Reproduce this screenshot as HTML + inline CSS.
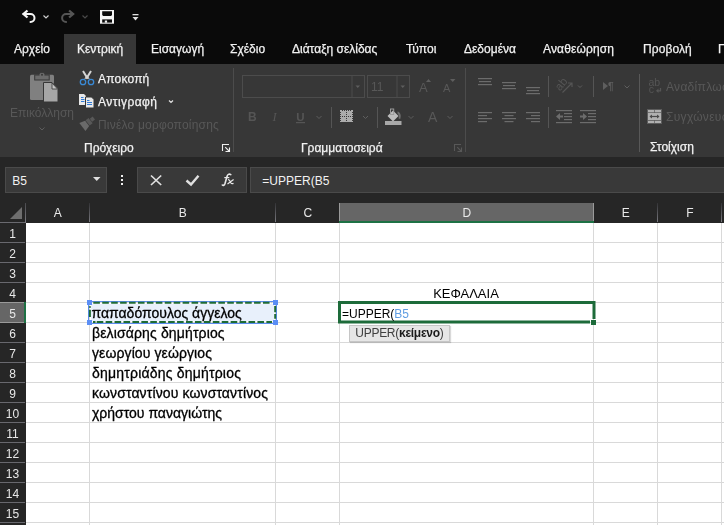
<!DOCTYPE html>
<html><head><meta charset="utf-8">
<style>
*{margin:0;padding:0;box-sizing:border-box}
html,body{width:724px;height:525px;overflow:hidden;background:#0a0a0a;font-family:"Liberation Sans",sans-serif;position:relative}
.a{position:absolute}
.t{position:absolute;white-space:nowrap;line-height:20px}
.wc{will-change:transform}
.bw{-webkit-text-stroke:0.25px currentColor}
svg{position:absolute;overflow:visible}
</style></head><body>

<svg style="left:0;top:0" width="724" height="34"><path d="M27.5 10.5 L23.5 14 L27.5 17.5" fill="none" stroke="#f5f5f5" stroke-width="2.3"/><path d="M23.5 14 H30.5 A4 4 0 0 1 30.5 22" fill="none" stroke="#f5f5f5" stroke-width="2" stroke-linecap="round"/><path d="M43.5 15.5 L46 18 L48.5 15.5" fill="none" stroke="#cfcfcf" stroke-width="1.2"/><path d="M69.1 10.5 L73.1 14 L69.1 17.5" fill="none" stroke="#555555" stroke-width="2.3"/><path d="M73.1 14 H66.1 A4 4 0 0 0 66.1 22" fill="none" stroke="#555555" stroke-width="2" stroke-linecap="round"/><path d="M82.5 15.5 L85 18 L87.5 15.5" fill="none" stroke="#4a4a4a" stroke-width="1.2"/><rect x="100" y="10" width="14" height="13.7" fill="#f5f5f5"/><path d="M102.2 11.3 H112 V15 L111 16 H103.2 L102.2 15 Z" fill="#0a0a0a"/><rect x="102.2" y="19.4" width="9.8" height="3.2" fill="#0a0a0a"/><rect x="104.8" y="20.5" width="2.3" height="2.2" fill="#f5f5f5"/><rect x="132.5" y="14" width="6" height="1.3" fill="#e0e0e0"/><path d="M132.5 17 H138.5 L135.5 20.5 Z" fill="#e0e0e0"/></svg>
<div class="a" style="left:64px;top:34px;width:72px;height:30px;background:#373737;"></div>
<div class="t wc bw" style="left:14px;top:38.84px;font-size:12px;color:#f2f2f2;font-weight:normal;letter-spacing:0px">Αρχείο</div>
<div class="t wc bw" style="left:76.5px;top:38.84px;font-size:12px;color:#f2f2f2;font-weight:normal;letter-spacing:0px">Κεντρική</div>
<div class="t wc bw" style="left:150.5px;top:38.84px;font-size:12px;color:#f2f2f2;font-weight:normal;letter-spacing:0px">Εισαγωγή</div>
<div class="t wc bw" style="left:230px;top:38.84px;font-size:12px;color:#f2f2f2;font-weight:normal;letter-spacing:0px">Σχέδιο</div>
<div class="t wc bw" style="left:292px;top:38.84px;font-size:12px;color:#f2f2f2;font-weight:normal;letter-spacing:0px">Διάταξη σελίδας</div>
<div class="t wc bw" style="left:406px;top:38.84px;font-size:12px;color:#f2f2f2;font-weight:normal;letter-spacing:0px">Τύποι</div>
<div class="t wc bw" style="left:464px;top:38.84px;font-size:12px;color:#f2f2f2;font-weight:normal;letter-spacing:0px">Δεδομένα</div>
<div class="t wc bw" style="left:542.5px;top:38.84px;font-size:12px;color:#f2f2f2;font-weight:normal;letter-spacing:0.15px">Αναθεώρηση</div>
<div class="t wc bw" style="left:642.5px;top:38.84px;font-size:12px;color:#f2f2f2;font-weight:normal;letter-spacing:0.1px">Προβολή</div>
<div class="t wc bw" style="left:718px;top:38.84px;font-size:12px;color:#f2f2f2;font-weight:normal;letter-spacing:0px">Γραφικά</div>
<div class="a" style="left:0px;top:64px;width:724px;height:93px;background:#373737;"></div>
<div class="a" style="left:233px;top:68px;width:1px;height:84px;background:#4c4c4c;"></div>
<div class="a" style="left:465px;top:68px;width:1px;height:84px;background:#4c4c4c;"></div>
<div class="a" style="left:639px;top:74px;width:1px;height:78px;background:#585858;"></div>
<svg style="left:0;top:64px" width="240" height="93"><rect x="30" y="10.7" width="24" height="25.3" rx="1.5" fill="#808080"/><circle cx="42" cy="11.5" r="3.3" fill="#6b6b6b" stroke="#373737" stroke-width="1"/><rect x="34.7" y="11" width="14.5" height="5" fill="#6b6b6b" stroke="#373737" stroke-width="1"/><rect x="39.6" y="10" width="4.8" height="2" fill="#6b6b6b"/><circle cx="42" cy="10.8" r="1" fill="#373737"/><path d="M43.5 18.5 H52 L58 24.5 V38 H43.5 Z" fill="#a6a6a6" stroke="#373737" stroke-width="1"/><path d="M52 19 V25 H57.5 Z" fill="#c4c4c4" stroke="#373737" stroke-width="0.8"/><path d="M39.5 63.5 L42 66 L44.5 63.5" fill="none" stroke="#5e5e5e" stroke-width="1"/><path d="M83 7 L87 13.5 L91 7" stroke="#d4d4d4" stroke-width="2" fill="none"/><path d="M84.3 14.8 L87 11 L89.7 14.8 Z" fill="#d4d4d4"/><circle cx="83" cy="18" r="2.7" fill="none" stroke="#3a8ad6" stroke-width="1.3"/><circle cx="91" cy="18" r="2.7" fill="none" stroke="#3a8ad6" stroke-width="1.3"/><path d="M79 30 H84 L86 32 V41 H79 Z" fill="#e8e8e8"/><rect x="81" y="33" width="2.5" height="1" fill="#2f7ad6"/><rect x="81" y="35" width="3.5" height="1" fill="#2f7ad6"/><rect x="81" y="37" width="3.5" height="1" fill="#2f7ad6"/><path d="M85.5 33 H91.5 L94 35.5 V44 H85.5 Z" fill="#e8e8e8" stroke="#373737" stroke-width="1"/><rect x="87" y="36" width="2.5" height="1" fill="#2f7ad6"/><rect x="87" y="38" width="5" height="1" fill="#2f7ad6"/><rect x="87" y="40" width="5" height="1" fill="#2f7ad6"/><path d="M169 36.5 L171 38.5 L173 36.5" fill="none" stroke="#e0e0e0" stroke-width="1.2"/><g transform="translate(82.4 63) rotate(-38)"><path d="M0 -5 L0 5 L6 3.3 L6 -3.3 Z" fill="#6a6a6a"/><rect x="6.6" y="-3.3" width="3.8" height="6.6" fill="#585858"/><rect x="10.9" y="-1.9" width="3.6" height="3.8" fill="#585858"/></g><path d="M222.5 151 V144.5 H229 M225.2 147.2 L229.5 151.5 M229.5 147.5 V151.5 H225.5" fill="none" stroke="#eeeeee" stroke-width="1.1" transform="translate(0 -64)"/></svg>
<div class="t wc" style="left:10px;top:102.84px;font-size:12px;color:#585858;font-weight:normal;">Επικόλληση</div>
<div class="t wc bw" style="left:98px;top:68.84px;font-size:12px;color:#f2f2f2;font-weight:normal;letter-spacing:0.2px">Αποκοπή</div>
<div class="t wc bw" style="left:98px;top:91.84px;font-size:12px;color:#f2f2f2;font-weight:normal;letter-spacing:0.45px">Αντιγραφή</div>
<div class="t wc" style="left:98px;top:115.34px;font-size:12px;color:#585858;font-weight:normal;letter-spacing:0.2px">Πινέλο μορφοποίησης</div>
<div class="t wc bw" style="left:84px;top:137.84px;font-size:12px;color:#f2f2f2;font-weight:normal;">Πρόχειρο</div>
<div class="t wc bw" style="left:301px;top:137.84px;font-size:12px;color:#f2f2f2;font-weight:normal;">Γραμματοσειρά</div>
<div class="t wc bw" style="left:650px;top:136.84px;font-size:12px;color:#f2f2f2;font-weight:normal;">Στοίχιση</div>
<div class="t wc" style="left:666px;top:76.84px;font-size:12px;color:#585858;font-weight:normal;letter-spacing:0.3px">Αναδίπλωση κειμένου</div>
<div class="t wc" style="left:666px;top:107.34px;font-size:12px;color:#585858;font-weight:normal;letter-spacing:0.3px">Συγχώνευση και στοίχιση</div>
<svg style="left:0;top:0" width="724" height="160"><rect x="242.5" y="75.5" width="122" height="22" fill="none" stroke="#4c4c4c"/><rect x="351.5" y="75.5" width="1" height="22" fill="#4c4c4c"/><path d="M355.5 85.5 H360 L357.75 88 Z" fill="#5e5e5e"/><rect x="367.5" y="75.5" width="42" height="22" fill="none" stroke="#4c4c4c"/><rect x="396.5" y="75.5" width="1" height="22" fill="#4c4c4c"/><path d="M400.5 85.5 H405 L402.75 88 Z" fill="#5e5e5e"/><path d="M426 82 H431 L428.5 79 Z" fill="#5e5e5e"/><path d="M450 79 H455.5 L452.75 82 Z" fill="#5e5e5e"/><path d="M316.5 116 L319 118.5 L321.5 116" fill="none" stroke="#5e5e5e" stroke-width="1"/><path d="M363 116 L365.5 118.5 L368 116" fill="none" stroke="#5e5e5e" stroke-width="1"/><path d="M408.5 116 L411 118.5 L413.5 116" fill="none" stroke="#5e5e5e" stroke-width="1"/><path d="M447.5 116 L450 118.5 L452.5 116" fill="none" stroke="#5e5e5e" stroke-width="1"/><rect x="331" y="107" width="1" height="21" fill="#555"/><rect x="377" y="107" width="1" height="21" fill="#555"/><rect x="340" y="110" width="13" height="12" fill="#acacac"/><path d="M352 112h1v1h-1zM352 118h1v1h-1zM346 114h1v1h-1zM346 120h1v1h-1zM342 110h1v1h-1zM340 116h1v1h-1zM344 110h1v1h-1zM342 116h1v1h-1zM344 116h1v1h-1zM352 114h1v1h-1zM352 120h1v1h-1zM346 110h1v1h-1zM348 110h1v1h-1zM346 116h1v1h-1zM348 116h1v1h-1zM340 112h1v1h-1zM340 118h1v1h-1zM350 110h1v1h-1zM350 116h1v1h-1zM352 116h1v1h-1zM346 112h1v1h-1zM346 118h1v1h-1zM340 114h1v1h-1zM340 120h1v1h-1z" fill="#3a3a3a" shape-rendering="crispEdges"/><path d="M387.5 116 L393 110.5 L398.5 116 L393 121.5 Z" fill="#bdbdbd"/><rect x="390.5" y="109" width="3.2" height="5.5" fill="none" stroke="#9c9c9c" stroke-width="1"/><path d="M397.5 111.5 C400.5 112 401.5 115.5 400.2 119 L398.6 118.5 C399 116 398.8 114.5 397.5 113.5 Z" fill="#6e6e6e"/><rect x="385" y="121" width="16.5" height="4" fill="#a8a8a8"/><path d="M454.5 151 V144.5 H461 M457.2 147.2 L461.5 151.5 M461.5 147.5 V151.5 H457.5" fill="none" stroke="#585858" stroke-width="1.1"/></svg>
<div class="t wc" style="left:371px;top:76.84px;font-size:12px;color:#585858;font-weight:normal;">11</div>
<div class="t wc" style="left:418.5px;top:77.50px;font-size:13px;color:#585858;font-weight:normal;">A</div>
<div class="t wc" style="left:443px;top:78.19px;font-size:11px;color:#585858;font-weight:normal;">A</div>
<svg style="left:0;top:0" width="724" height="160"><text x="248" y="121" font-family="Liberation Sans" font-weight="bold" font-size="12" fill="#555">B</text><text x="272.5" y="121" font-family="Liberation Serif" font-style="italic" font-size="12.5" fill="#555">I</text><text x="296.3" y="121" font-family="Liberation Sans" font-weight="bold" font-size="11.5" fill="#555">U</text><rect x="296" y="122" width="9" height="1.2" fill="#555"/></svg>
<div class="t wc" style="left:427.5px;top:107.15px;font-size:14px;color:#585858;font-weight:normal;">A</div>
<svg style="left:0;top:0" width="724" height="160"><rect x="478.0" y="78" width="14" height="1.2" fill="#6c6c6c"/><rect x="479.0" y="81" width="12" height="1.2" fill="#6c6c6c"/><rect x="478.0" y="84" width="14" height="1.2" fill="#6c6c6c"/><rect x="502.0" y="82" width="14" height="1.2" fill="#6c6c6c"/><rect x="503.0" y="85" width="12" height="1.2" fill="#6c6c6c"/><rect x="502.0" y="88" width="14" height="1.2" fill="#6c6c6c"/><rect x="526.0" y="87" width="14" height="1.2" fill="#6c6c6c"/><rect x="527.0" y="90" width="12" height="1.2" fill="#6c6c6c"/><rect x="526.0" y="93" width="14" height="1.2" fill="#6c6c6c"/><rect x="478" y="112" width="14" height="1.2" fill="#6c6c6c"/><rect x="478" y="115" width="9" height="1.2" fill="#6c6c6c"/><rect x="478" y="118" width="14" height="1.2" fill="#6c6c6c"/><rect x="478" y="121" width="9" height="1.2" fill="#6c6c6c"/><rect x="502.0" y="112" width="14" height="1.2" fill="#6c6c6c"/><rect x="504.5" y="115" width="9" height="1.2" fill="#6c6c6c"/><rect x="502.0" y="118" width="14" height="1.2" fill="#6c6c6c"/><rect x="504.5" y="121" width="9" height="1.2" fill="#6c6c6c"/><rect x="526" y="112" width="14" height="1.2" fill="#6c6c6c"/><rect x="531" y="115" width="9" height="1.2" fill="#6c6c6c"/><rect x="526" y="118" width="14" height="1.2" fill="#6c6c6c"/><rect x="531" y="121" width="9" height="1.2" fill="#6c6c6c"/><rect x="548" y="76" width="1" height="21" fill="#555"/><rect x="548" y="107" width="1" height="21" fill="#555"/><rect x="593" y="76" width="1" height="21" fill="#555"/><text x="0" y="0" transform="translate(560 91.5) rotate(-50)" font-family="Liberation Sans" font-size="11.5" fill="#555">ab</text><path d="M562.5 92.5 L571.5 83.5 M568 83 H572 V87" stroke="#555" stroke-width="1.2" fill="none"/><path d="M578 85.5 L580 87.5 L582 85.5" fill="none" stroke="#5e5e5e" stroke-width="1"/><rect x="556" y="110" width="16" height="1.2" fill="#6c6c6c"/><rect x="556" y="122" width="16" height="1.2" fill="#6c6c6c"/><rect x="564" y="113" width="8" height="1.2" fill="#6c6c6c"/><rect x="564" y="116" width="8" height="1.2" fill="#6c6c6c"/><rect x="564" y="119" width="8" height="1.2" fill="#6c6c6c"/><path d="M556 116.5 L560 113 V115.5 H563 V117.5 H560 V120 Z" fill="#6c6c6c"/><rect x="580" y="110" width="16" height="1.2" fill="#6c6c6c"/><rect x="580" y="122" width="16" height="1.2" fill="#6c6c6c"/><rect x="588" y="113" width="8" height="1.2" fill="#6c6c6c"/><rect x="588" y="116" width="8" height="1.2" fill="#6c6c6c"/><rect x="588" y="119" width="8" height="1.2" fill="#6c6c6c"/><path d="M587 116.5 L583 113 V115.5 H580 V117.5 H583 V120 Z" fill="#6c6c6c"/><path d="M603 82 L608 86 L603 90 Z" fill="#5e5e5e"/><text x="608" y="90" font-family="Liberation Sans" font-size="10" font-weight="bold" fill="#5e5e5e">¶</text><path d="M624.5 85.5 L627 88 L629.5 85.5" fill="none" stroke="#5e5e5e" stroke-width="1"/><text x="648.5" y="86.2" font-family="Liberation Sans" font-size="10.5" fill="#555">ab</text><text x="648.8" y="93.3" font-family="Liberation Sans" font-size="10.5" fill="#555">c</text><path d="M660.5 88 V90.8 H657" fill="none" stroke="#555" stroke-width="1.3"/><path d="M656 90.8 L658.5 88.5 V93 Z" fill="#555"/><rect x="647" y="109" width="15" height="15" fill="#5c5c5c"/><rect x="648" y="110" width="6.3" height="2.3" fill="#b0b0b0"/><rect x="655" y="110" width="6" height="2.3" fill="#b0b0b0"/><rect x="648" y="113" width="13" height="7" fill="#b0b0b0"/><rect x="648" y="120.8" width="6.3" height="2.2" fill="#b0b0b0"/><rect x="655" y="120.8" width="6" height="2.2" fill="#b0b0b0"/><path d="M650 116.5 H659" stroke="#4a4a4a" stroke-width="1.2"/><path d="M649.5 116.5 L652 114.5 V118.5 Z M659.5 116.5 L657 114.5 V118.5 Z" fill="#4a4a4a"/></svg>
<div class="a" style="left:0px;top:157px;width:724px;height:65px;background:#262626;"></div>
<div class="a" style="left:5px;top:167px;width:102px;height:26px;background:#393939;border:1px solid #4a4a4a"></div>
<div class="t " style="left:12.3px;top:170.84px;font-size:12px;color:#f2f2f2;font-weight:normal;">B5</div>
<svg style="left:0;top:0" width="724" height="200"><path d="M93 177 H100.5 L96.75 181 Z" fill="#e0e0e0"/><rect x="121" y="175" width="2" height="2" fill="#f0f0f0"/><rect x="121" y="179" width="2" height="2" fill="#f0f0f0"/><rect x="121" y="183" width="2" height="2" fill="#f0f0f0"/></svg>
<div class="a" style="left:137px;top:167px;width:110px;height:26px;background:#393939;border:1px solid #4a4a4a"></div>
<svg style="left:0;top:0" width="724" height="200"><path d="M151 175.5 L161.2 185 M161.2 175.5 L151 185" stroke="#e0e0e0" stroke-width="1.7"/><path d="M186.5 180.5 L191 184.5 L198.5 175.8" stroke="#e0e0e0" stroke-width="2.4" fill="none"/><path d="M230.8 174.6 C229 173.6 227.6 174.4 227 176.5 L225 183.5 C224.4 185.4 223.2 185.8 222.3 185" stroke="#e8e8e8" stroke-width="1.6" fill="none" stroke-linecap="round"/><path d="M224.3 177.6 H229.3" stroke="#e8e8e8" stroke-width="1.2"/><path d="M228 179.6 C229.5 179.2 230 181 230.8 182.8 C231.3 183.8 232.2 184 233.5 183.4 M233.6 179.6 L227.5 184" stroke="#e8e8e8" stroke-width="1.2" fill="none"/></svg>
<div class="a" style="left:250px;top:167px;width:480px;height:26px;background:#393939;border:1px solid #4a4a4a"></div>
<div class="t " style="left:262.3px;top:170.84px;font-size:12px;color:#f2f2f2;font-weight:normal;">=UPPER(B5</div>
<div class="a" style="left:25px;top:223px;width:699px;height:302px;background:#ffffff;"></div>
<div class="a" style="left:25px;top:242px;width:699px;height:1px;background:#d9d9d9;"></div>
<div class="a" style="left:25px;top:262px;width:699px;height:1px;background:#d9d9d9;"></div>
<div class="a" style="left:25px;top:282px;width:699px;height:1px;background:#d9d9d9;"></div>
<div class="a" style="left:25px;top:302px;width:699px;height:1px;background:#d9d9d9;"></div>
<div class="a" style="left:25px;top:322px;width:699px;height:1px;background:#d9d9d9;"></div>
<div class="a" style="left:25px;top:342px;width:699px;height:1px;background:#d9d9d9;"></div>
<div class="a" style="left:25px;top:362px;width:699px;height:1px;background:#d9d9d9;"></div>
<div class="a" style="left:25px;top:382px;width:699px;height:1px;background:#d9d9d9;"></div>
<div class="a" style="left:25px;top:402px;width:699px;height:1px;background:#d9d9d9;"></div>
<div class="a" style="left:25px;top:422px;width:699px;height:1px;background:#d9d9d9;"></div>
<div class="a" style="left:25px;top:442px;width:699px;height:1px;background:#d9d9d9;"></div>
<div class="a" style="left:25px;top:462px;width:699px;height:1px;background:#d9d9d9;"></div>
<div class="a" style="left:25px;top:482px;width:699px;height:1px;background:#d9d9d9;"></div>
<div class="a" style="left:25px;top:502px;width:699px;height:1px;background:#d9d9d9;"></div>
<div class="a" style="left:25px;top:522px;width:699px;height:1px;background:#d9d9d9;"></div>
<div class="a" style="left:25px;top:542px;width:699px;height:1px;background:#d9d9d9;"></div>
<div class="a" style="left:89px;top:223px;width:1px;height:302px;background:#d9d9d9;"></div>
<div class="a" style="left:275px;top:223px;width:1px;height:302px;background:#d9d9d9;"></div>
<div class="a" style="left:339px;top:223px;width:1px;height:302px;background:#d9d9d9;"></div>
<div class="a" style="left:593px;top:223px;width:1px;height:302px;background:#d9d9d9;"></div>
<div class="a" style="left:657px;top:223px;width:1px;height:302px;background:#d9d9d9;"></div>
<div class="a" style="left:721px;top:223px;width:1px;height:302px;background:#d9d9d9;"></div>
<div class="a" style="left:785px;top:223px;width:1px;height:302px;background:#d9d9d9;"></div>
<div class="a" style="left:25px;top:222px;width:699px;height:1px;background:#262626;"></div>
<div class="a" style="left:0px;top:222px;width:25px;height:1px;background:#6a6a70;"></div>
<div class="a" style="left:25px;top:203px;width:1px;height:20px;background:linear-gradient(#4a4a4e,#7a7a80);"></div>
<div class="a" style="left:89px;top:203px;width:1px;height:19px;background:linear-gradient(#333336,#7a7a80);"></div>
<div class="a" style="left:275px;top:203px;width:1px;height:19px;background:linear-gradient(#333336,#7a7a80);"></div>
<div class="a" style="left:339px;top:203px;width:1px;height:19px;background:linear-gradient(#333336,#7a7a80);"></div>
<div class="a" style="left:593px;top:203px;width:1px;height:19px;background:linear-gradient(#333336,#7a7a80);"></div>
<div class="a" style="left:657px;top:203px;width:1px;height:19px;background:linear-gradient(#333336,#7a7a80);"></div>
<div class="a" style="left:721px;top:203px;width:1px;height:19px;background:linear-gradient(#333336,#7a7a80);"></div>
<div class="a" style="left:785px;top:203px;width:1px;height:19px;background:linear-gradient(#333336,#7a7a80);"></div>
<div class="a" style="left:339px;top:203px;width:255px;height:19px;background:#666666;"></div>
<div class="a" style="left:339px;top:203px;width:1px;height:19px;background:#9a9a9a;"></div>
<div class="a" style="left:593px;top:203px;width:1px;height:19px;background:#9a9a9a;"></div>
<div class="a" style="left:339px;top:221px;width:255px;height:2px;background:#1d7144;"></div>
<div class="t" style="left:25.8px;width:64px;top:202.74px;font-size:12px;color:#e8e8e8;text-align:center">A</div>
<div class="t" style="left:89.8px;width:186px;top:202.74px;font-size:12px;color:#e8e8e8;text-align:center">B</div>
<div class="t" style="left:275.8px;width:64px;top:202.74px;font-size:12px;color:#e8e8e8;text-align:center">C</div>
<div class="t" style="left:339.8px;width:254px;top:202.74px;font-size:12px;color:#e8e8e8;text-align:center">D</div>
<div class="t" style="left:593.8px;width:64px;top:202.74px;font-size:12px;color:#e8e8e8;text-align:center">E</div>
<div class="t" style="left:657.8px;width:64px;top:202.74px;font-size:12px;color:#e8e8e8;text-align:center">F</div>
<div class="t" style="left:721.8px;width:64px;top:202.74px;font-size:12px;color:#e8e8e8;text-align:center">G</div>
<svg style="left:0;top:0" width="30" height="225"><path d="M22 207 V219 H10 Z" fill="#6e6e6e"/></svg>
<div class="a" style="left:0px;top:223px;width:25px;height:302px;background:#262626;"></div>
<div class="a" style="left:25px;top:223px;width:1px;height:302px;background:#262626;"></div>
<div class="a" style="left:0px;top:242px;width:25px;height:1px;background:#68686e;"></div>
<div class="a" style="left:0px;top:262px;width:25px;height:1px;background:#68686e;"></div>
<div class="a" style="left:0px;top:282px;width:25px;height:1px;background:#68686e;"></div>
<div class="a" style="left:0px;top:302px;width:25px;height:1px;background:#68686e;"></div>
<div class="a" style="left:0px;top:322px;width:25px;height:1px;background:#68686e;"></div>
<div class="a" style="left:0px;top:342px;width:25px;height:1px;background:#68686e;"></div>
<div class="a" style="left:0px;top:362px;width:25px;height:1px;background:#68686e;"></div>
<div class="a" style="left:0px;top:382px;width:25px;height:1px;background:#68686e;"></div>
<div class="a" style="left:0px;top:402px;width:25px;height:1px;background:#68686e;"></div>
<div class="a" style="left:0px;top:422px;width:25px;height:1px;background:#68686e;"></div>
<div class="a" style="left:0px;top:442px;width:25px;height:1px;background:#68686e;"></div>
<div class="a" style="left:0px;top:462px;width:25px;height:1px;background:#68686e;"></div>
<div class="a" style="left:0px;top:482px;width:25px;height:1px;background:#68686e;"></div>
<div class="a" style="left:0px;top:502px;width:25px;height:1px;background:#68686e;"></div>
<div class="a" style="left:0px;top:522px;width:25px;height:1px;background:#68686e;"></div>
<div class="a" style="left:0px;top:542px;width:25px;height:1px;background:#68686e;"></div>
<div class="a" style="left:0px;top:302px;width:25px;height:20px;background:#666666;"></div>
<div class="a" style="left:0px;top:302px;width:25px;height:1px;background:#9a9a9a;"></div>
<div class="a" style="left:0px;top:322px;width:25px;height:1px;background:#9a9a9a;"></div>
<div class="a" style="left:24px;top:302px;width:2px;height:21px;background:#1d7144;"></div>
<div class="t" style="left:0;width:25px;top:223.84px;font-size:12px;color:#e8e8e8;text-align:center">1</div>
<div class="t" style="left:0;width:25px;top:243.84px;font-size:12px;color:#e8e8e8;text-align:center">2</div>
<div class="t" style="left:0;width:25px;top:263.84px;font-size:12px;color:#e8e8e8;text-align:center">3</div>
<div class="t" style="left:0;width:25px;top:283.84px;font-size:12px;color:#e8e8e8;text-align:center">4</div>
<div class="t" style="left:0;width:25px;top:303.84px;font-size:12px;color:#e8e8e8;text-align:center">5</div>
<div class="t" style="left:0;width:25px;top:323.84px;font-size:12px;color:#e8e8e8;text-align:center">6</div>
<div class="t" style="left:0;width:25px;top:343.84px;font-size:12px;color:#e8e8e8;text-align:center">7</div>
<div class="t" style="left:0;width:25px;top:363.84px;font-size:12px;color:#e8e8e8;text-align:center">8</div>
<div class="t" style="left:0;width:25px;top:383.84px;font-size:12px;color:#e8e8e8;text-align:center">9</div>
<div class="t" style="left:0;width:25px;top:403.84px;font-size:12px;color:#e8e8e8;text-align:center">10</div>
<div class="t" style="left:0;width:25px;top:423.84px;font-size:12px;color:#e8e8e8;text-align:center">11</div>
<div class="t" style="left:0;width:25px;top:443.84px;font-size:12px;color:#e8e8e8;text-align:center">12</div>
<div class="t" style="left:0;width:25px;top:463.84px;font-size:12px;color:#e8e8e8;text-align:center">13</div>
<div class="t" style="left:0;width:25px;top:483.84px;font-size:12px;color:#e8e8e8;text-align:center">14</div>
<div class="t" style="left:0;width:25px;top:503.84px;font-size:12px;color:#e8e8e8;text-align:center">15</div>
<div class="t" style="left:0;width:25px;top:523.84px;font-size:12px;color:#e8e8e8;text-align:center">16</div>
<div class="a" style="left:91px;top:304px;width:183px;height:17px;background:#e8f0fb;"></div>
<div class="t " style="left:91.5px;top:303.45px;font-size:14px;color:#000000;font-weight:normal;letter-spacing:0px;-webkit-text-stroke:0.3px #000">παπαδόπουλος άγγελος</div>
<div class="t " style="left:92px;top:323.45px;font-size:14px;color:#000000;font-weight:normal;letter-spacing:0.14px;-webkit-text-stroke:0.3px #000">βελισάρης δημήτριος</div>
<div class="t " style="left:92px;top:343.45px;font-size:14px;color:#000000;font-weight:normal;letter-spacing:0.1px;-webkit-text-stroke:0.3px #000">γεωργίου γεώργιος</div>
<div class="t " style="left:92px;top:363.45px;font-size:14px;color:#000000;font-weight:normal;letter-spacing:0.2px;-webkit-text-stroke:0.3px #000">δημητριάδης δημήτριος</div>
<div class="t " style="left:92px;top:383.45px;font-size:14px;color:#000000;font-weight:normal;letter-spacing:0.13px;-webkit-text-stroke:0.3px #000">κωνσταντίνου κωνσταντίνος</div>
<div class="t " style="left:92px;top:403.45px;font-size:14px;color:#000000;font-weight:normal;letter-spacing:0px;-webkit-text-stroke:0.3px #000">χρήστου παναγιώτης</div>
<div class="t" style="left:339px;width:254px;top:283.50px;font-size:13px;color:#000;text-align:center">ΚΕΦΑΛΑΙΑ</div>
<svg style="left:0;top:0" width="724" height="525"><path d="M92 301.5 H273 M92 323.5 H273 M88.5 305 V320 M276.5 305 V320" stroke="#5b8def" stroke-width="1" fill="none"/><path d="M93.3 302.85 H272" stroke="#1e6b35" stroke-width="2" stroke-dasharray="6.6 2.33" fill="none"/><path d="M93 322.1 H272" stroke="#1e6b35" stroke-width="2" stroke-dasharray="2.5 1.2 6.6 2.33 6.6 2.33 6.6 2.33 6.6 2.33 6.6 2.33 6.6 2.33 6.6 2.33 6.6 2.33 6.6 2.33 6.6 2.33 6.6 2.33 6.6 2.33 6.6 2.33 6.6 2.33 6.6 2.33 6.6 2.33 6.6 2.33 6.6 2.33 6.6 2.33 6.6 2.33 6.6 2.33 6.6 2.33" fill="none"/><path d="M89.9 306.3 V307.7 M89.9 309.7 V317" stroke="#1e6b35" stroke-width="2" fill="none"/><path d="M275.2 306 V312.2 M275.2 313.9 V318.7" stroke="#1e6b35" stroke-width="2" fill="none"/><rect x="87" y="300" width="5" height="5" fill="#5b8ef5"/><rect x="273" y="300" width="5" height="5" fill="#5b8ef5"/><rect x="87" y="320" width="5" height="5" fill="#5b8ef5"/><rect x="273" y="320" width="5" height="5" fill="#5b8ef5"/><path d="M590 322 H339.5 V302.5 H594 V319" fill="none" stroke="#1d6b3a" stroke-width="3"/><rect x="591" y="320" width="5" height="5" fill="#1d6b3a"/></svg>
<div class="t " style="left:342px;top:303.84px;font-size:12px;color:#000;font-weight:normal;">=UPPER(<span style="color:#5f9de2">B5</span></div>
<div class="a" style="left:349px;top:325px;width:101px;height:17px;background:#e6e6e6;border:1px solid #c6c6c6;box-shadow:1px 1px 1px rgba(0,0,0,0.15)"></div>
<div class="t " style="left:355.3px;top:322.54px;font-size:12px;color:#404040;font-weight:normal;letter-spacing:-0.28px">UPPER(<b style="color:#1a1a1a">κείμενο</b>)</div>
</body></html>
